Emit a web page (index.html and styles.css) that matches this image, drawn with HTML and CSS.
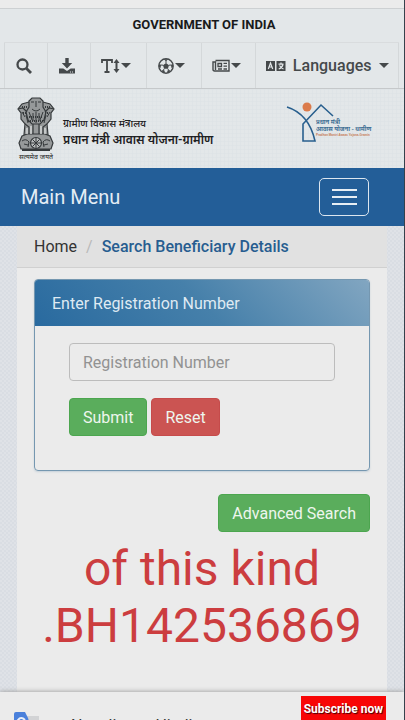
FILE: index.html
```html
<!DOCTYPE html>
<html lang="en">
<head>
    <meta charset="UTF-8">
    <meta name="viewport" content="width=device-width, initial-scale=1.0">
    <title>Search Beneficiary Details</title>
    <link rel="stylesheet" href="styles.css">
</head>
<body>
    <div class="page">
        <header>
            <div class="gov-title">GOVERNMENT OF INDIA</div>
            <div class="toolbar">
                <button class="tool" aria-label="Search">
                    <svg width="16" height="16" viewBox="0 0 16 16"><circle cx="6.5" cy="6.5" r="5" fill="none" stroke="currentColor" stroke-width="2.3"/><path d="M10.3 10.3L15 15" stroke="currentColor" stroke-width="2.8"/></svg>
                </button>
                <button class="tool" aria-label="Download">
                    <svg width="16" height="16" viewBox="0 0 16 16"><path fill="currentColor" d="M6.3 0h3.4v5h3.5L8 10.4 2.8 5h3.5zM0 10.500h4.3L8 13l3.7-2.500H16v5H0z"/><path stroke="#e3e7e9" d="M11 14h1m1 0h1"/></svg>
                </button>
                <button class="tool" aria-label="Text size">
                    <svg width="19" height="16" viewBox="0 0 19 16"><path fill="none" stroke="currentColor" stroke-width="1.8" d="M1 5V2h10v3M6 2v12M3.500 14h5"/><path fill="currentColor" d="M15.500 1l3 4h-2v6h2l-3 4-3-4h2V5h-2z"/></svg>
                    <span class="caret"></span>
                </button>
                <button class="tool" aria-label="Theme">
                    <svg width="16" height="16" viewBox="0 0 16 16"><circle cx="8" cy="8" r="7.200" fill="none" stroke="currentColor" stroke-width="1.400"/><path fill="currentColor" d="M8 5l3 2.200L9.900 10.800H6.100L5 7.200zM5.500 1.200h5L8 3zM1 6l2 1-.4 3L1 9zM15 6l-2 1 .4 3L15 9zM4 12.200l2.500.3.5 2.500-3-1.400zM12 12.200l-2.500.3L9 15l3-1.400z"/><path stroke="currentColor" d="M8 5V2M5 7.200L2.500 7M11 7.200l2.500-.2M6.100 10.800L5 13M9.900 10.800L11 13"/></svg>
                    <span class="caret"></span>
                </button>
                <button class="tool" aria-label="News">
                    <svg width="18" height="14" viewBox="0 0 18 14"><path fill="none" stroke="currentColor" stroke-width="1.400" d="M3.500 1.500h13.500v10.500H2.500Q1 12 1 10.500V3h2.500V11"/><path fill="none" stroke="currentColor" stroke-width="1.300" d="M6 4.500h3.500v3H6zM6 10h4M11.500 4.300H15M11.500 7.200H15M11.500 10H15"/></svg>
                    <span class="caret"></span>
                </button>
                <button class="tool languages">
                    <svg width="20" height="12" viewBox="0 0 20 12"><path fill="currentColor" d="M0 1h9v10H0zM10.500 1h9v10h-9z"/><path fill="none" stroke="#e3e7e9" stroke-width="1.200" d="M2.300 9L4.500 3 6.700 9M3 7h3M12.500 4.200h5M15 2.500v2M17 4.500Q16 8 12.700 9M13.500 5.500Q15 8 17.500 9"/></svg>
                    Languages
                    <span class="caret"></span>
                </button>
            </div>
            <div class="brand">
                <div class="emblem">
                    <svg width="38" height="56" viewBox="0 0 38 56">
                        <g fill="#96999a" stroke="#35393b" stroke-width="1.200">
                            <path d="M12 5L5 7 1 12l3 4v6l4 5-1 11 5 3h14l5-3-1-11 4-5v-6l3-4-4-5-7-2z"/>
                            <path d="M12 4l3-3h8l3 3v6l3 5-2 8-4 4h-8l-4-4-2-8 3-5z"/>
                            <path d="M1 12l5-1 4 4M37 12l-5-1-4 4M8 27l4 3v9M30 27l-4 3v9M16 27v12M22 27v12"/>
                            <path d="M5 39l5-2h18l5 2 3 7-2 6H4l-2-6z"/>
                            <circle cx="19" cy="46" r="5.500" fill="#b9bcbd"/>
                        </g>
                        <g fill="none" stroke="#35393b">
                            <path d="M14 5h3m4 0h3M19 4v6M15 12q4 4 8 0M12 15l3 8m11-8l-3 8M16 16v8m3-9v11m3-10v8M5 15l3 5m25-5l-3 5M9 18l2 8m18-8l-2 8"/>
                            <path stroke-dasharray="1 1" stroke-width="2" d="M5 10h5m18 0h5M6 16h4m18 0h4M12 20h14M11 24h16"/>
                            <path d="M19 41v10M14 46h10M15.500 42.500l7 7m0-7l-7 7M5 44q4-3 7 1l-1 5M33 44q-4-3-7 1l1 5M7 47l4 1m20-1l-4 1"/>
                            <path stroke="#d7dadb" stroke-width="1.400" d="M10 31v6M14 29v8M24 29v8M28 31v6"/>
                            <path stroke-width="2" d="M5 53h28"/>
                        </g>
                    </svg>
                    <span>सत्यमेव जयते</span>
                </div>
                <div class="ministry">
                    <span class="dept">ग्रामीण विकास मंत्रालय</span>
                    <strong>प्रधान मंत्री आवास योजना-ग्रामीण</strong>
                </div>
                <div class="scheme">
                    <svg width="50" height="42" viewBox="0 0 50 42"><path fill="none" stroke="#285f8e" stroke-width="1.600" d="M1 6Q23 13 29 40H17V23L35 4l12 11"/><circle cx="21" cy="6" r="4.500" fill="#db7b4b"/></svg>
                    <div class="scheme-name">
                        <span>प्रधान मंत्री</span>
                        <span>आवास योजना - ग्रामीण</span>
                        <span class="scheme-en">Pradhan Mantri Awaas Yojana-Gramin</span>
                    </div>
                </div>
            </div>
        </header>
        <nav class="main-menu">
            <a href="#">Main Menu</a>
            <button class="menu-toggle" aria-label="Toggle navigation">
                <span></span>
                <span></span>
                <span></span>
            </button>
        </nav>
        <main>
            <nav class="breadcrumb" aria-label="Breadcrumb">
                <a href="#">Home</a>
                <span class="slash">/</span>
                <strong>Search Beneficiary Details</strong>
            </nav>
            <div class="content">
                <form class="panel">
                    <div class="panel-heading"><label for="reg-no">Enter Registration Number</label></div>
                    <div class="panel-body">
                        <input type="text" id="reg-no" placeholder="Registration Number">
                        <div class="buttons">
                            <button type="submit" class="btn btn-success">Submit</button>
                            <button type="reset" class="btn btn-danger">Reset</button>
                        </div>
                    </div>
                </form>
                <button class="btn btn-success advanced">Advanced Search</button>
                <p class="caption">of this kind<br>.BH142536869</p>
            </div>
        </main>
        <footer class="translate-bar">
            <svg width="26" height="26" viewBox="0 0 26 26"><path fill="#d2d3d5" d="M12 4h13v20H15z"/><path fill="#4a80db" d="M2 0h9l3 6 4 14H2Q0 20 0 18V2Q0 0 2 0z"/><path fill="none" stroke="#e9eef7" stroke-width="2" d="M11 8Q7 4 4 8t1 6 7-2H8"/></svg>
            <div class="translate-tabs">
                <span>Nepali</span>
                <span>Hindi</span>
            </div>
            <button class="subscribe">Subscribe now</button>
        </footer>
    </div>
</body>
</html>
```
FILE: styles.css
```css
* {
    box-sizing: border-box;
}

body {
    margin: 0;
    font-family: Roboto, "Noto Sans", sans-serif;
    font-size: 16px;
    color: #333;
    background-color: #dce0e4;
}

button {
    font-family: inherit;
    cursor: pointer;
}

a {
    color: inherit;
    text-decoration: none;
}

.page {
    height: 100vh;
    display: flex;
    flex-direction: column;
    overflow: hidden;
    border-right: 1px solid #35414c;
    background: repeating-conic-gradient(#d9dde3 0 25%, #dfe2e7 0 50%) 0 0 / 4px 4px;
}

header {
    border-top: 8px solid #ebebeb;
    background-color: #e3e7e9;
}

.gov-title {
    height: 34px;
    border-top: 1px solid #cdd0d2;
    padding-left: 4px;
    font-size: 13px;
    font-weight: 700;
    line-height: 32px;
    text-align: center;
    color: #191b1c;
}

.toolbar {
    display: grid;
    grid-template-columns: 43fr 43fr 56fr 55fr 55fr 144fr;
    height: 46px;
    margin: 0 5px 0 4px;
    border-top: 1px solid #d9dcde;
}

.tool {
    display: flex;
    align-items: center;
    justify-content: center;
    padding: 0 4px 0 0;
    border: 0;
    border-left: 1px solid #d4d8da;
    background: none;
    color: #45494b;
}

.languages {
    gap: 7px;
    padding: 0;
    border-right: 1px solid #d4d8da;
    font-size: 16px;
    font-weight: 500;
}

.caret {
    margin-left: 1px;
    border: 5px solid transparent;
    border-top-color: currentColor;
    border-bottom: 0;
}

.languages .caret {
    margin-left: 0;
}

.brand {
    display: flex;
    height: 80px;
    padding: 8px 35px 0 17px;
    border-top: 1px solid #c5c8ca;
    background: repeating-linear-gradient(#dce2e580 0 1px, transparent 1px 4px), repeating-linear-gradient(90deg, #dfe4e7 0 1px, #e3e7e9 1px 4px);
}

.emblem {
    display: flex;
    flex-direction: column;
    align-items: center;
    width: 38px;
    font-size: 7px;
    line-height: 8px;
    white-space: nowrap;
    color: #222;
}

.ministry {
    display: flex;
    flex-direction: column;
    margin: 19px 0 0 8px;
    white-space: nowrap;
    line-height: 16px;
    font-size: 12px;
    color: #1d2022;
}

.ministry strong {
    font-weight: 600;
}

.dept {
    font-size: 10px;
    font-weight: 500;
}

.scheme {
    display: grid;
    margin: 4px 0 0 auto;
    width: 83px;
    height: 42px;
}

.scheme svg, .scheme-name {
    grid-area: 1 / 1;
}

.scheme-name {
    display: flex;
    flex-direction: column;
    padding: 17px 0 0 30px;
    font-size: 6px;
    line-height: 7px;
    font-weight: 700;
    white-space: nowrap;
    color: #3e6e93;
}

.scheme-en {
    font-family: "Liberation Sans", sans-serif;
    font-size: 3px;
    color: #c67b55;
}

.main-menu {
    display: flex;
    align-items: center;
    justify-content: space-between;
    height: 58px;
    padding: 0 35px 0 21px;
    background-color: #235e98;
    color: #e4edf5;
    font-size: 20px;
}

.menu-toggle {
    display: flex;
    flex-direction: column;
    align-items: center;
    justify-content: center;
    gap: 5px;
    width: 50px;
    height: 38px;
    padding: 0;
    border: 1px solid #dce6ef;
    border-radius: 5px;
    background: none;
}

.menu-toggle span {
    width: 25px;
    height: 2px;
    background-color: #e7eef4;
}

main {
    flex: 1;
    margin: 0 17px;
    background-color: #ebebeb;
}

.breadcrumb {
    display: flex;
    gap: 9px;
    padding: 0 17px;
    border-bottom: 1px solid #d0d0d0;
    background-color: #e1e1e1;
    line-height: 41px;
}

.breadcrumb strong {
    font-weight: 500;
    color: #275d90;
}

.slash {
    color: #b9b9b9;
}

.content {
    display: flex;
    flex-direction: column;
    padding: 11px 17px 0;
}

.panel {
    height: 192px;
    border: 1px solid #7597b0;
    border-radius: 4px;
    overflow: hidden;
    box-shadow: 0 1px 2px #c5d0d9;
}

.panel-heading {
    height: 46px;
    padding-left: 17px;
    background: linear-gradient(45deg, #296a9f, #4680aa 50%, #82a6c1);
    color: #dfeaf3;
    line-height: 47px;
}

.panel-body {
    padding: 17px 34px;
}

input {
    display: block;
    width: 100%;
    height: 38px;
    padding: 0 13px;
    border: 1px solid #bcbcbc;
    border-radius: 4px;
    background-color: #ebebeb;
    font: inherit;
}

input::placeholder {
    color: #929292;
}

.buttons {
    display: flex;
    gap: 4px;
    margin-top: 17px;
}

.btn {
    height: 38px;
    padding: 0 13px;
    border: 1px solid;
    border-radius: 4px;
    font-size: 16px;
    color: #eef6ee;
}

.btn-success {
    border-color: #4ca64f;
    background-color: #5aad5c;
}

.btn-danger {
    border-color: #c64b4b;
    background-color: #cb5452;
}

.advanced {
    align-self: flex-end;
    margin-top: 23px;
}

.caption {
    margin: 8px -17px 0;
    text-align: center;
    font-size: 48px;
    line-height: 57px;
    color: #cc3d3f;
}

.translate-bar {
    display: flex;
    height: 28px;
    padding: 4px 18px 0 14px;
    background-color: #ebebeb;
    box-shadow: 0 -1px 4px #aaa;
    overflow: hidden;
}

.translate-bar svg {
    flex: none;
    margin-top: 16px;
}

.translate-tabs {
    display: flex;
    gap: 39px;
    margin: 18px 0 0 31px;
    line-height: 24px;
}

.subscribe {
    height: 26px;
    margin-left: auto;
    padding: 0 3px;
    border: 0;
    background-color: #f80606;
    color: #fff;
    font-size: 12px;
    font-weight: 700;
    text-shadow: 1px 1px 1px #400;
}
```
